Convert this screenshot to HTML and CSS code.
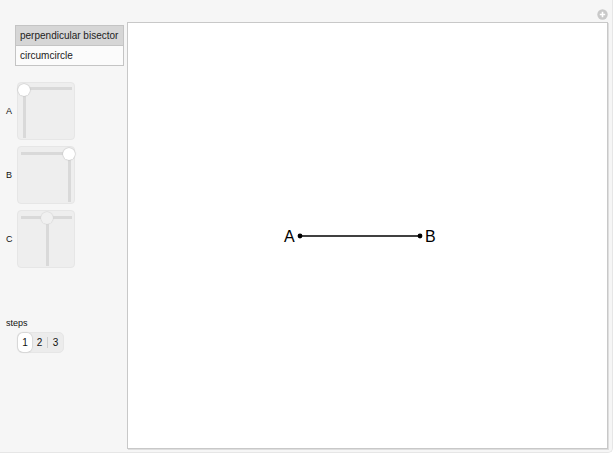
FILE: index.html
```html
<!DOCTYPE html>
<html>
<head>
<meta charset="utf-8">
<link rel="stylesheet" href="styles.css">
</head>
<body>
<div class="panel">
  <div class="plus"><svg width="11" height="11" viewBox="0 0 11 11"><circle cx="5.5" cy="5.5" r="5.2" fill="#c9c9c9"/><path d="M5.5 2.8v5.4M2.8 5.5h5.4" stroke="#fff" stroke-width="1.6"/></svg></div>
  <div class="controls">
    <div class="setter">
      <div class="opt sel">perpendicular bisector</div>
      <div class="opt">circumcircle</div>
    </div>
    <div class="sliders">
      <div class="srow"><span class="lbl">A</span>
        <div class="pad"><div class="htrack" style="top:4px"></div><div class="vtrack" style="left:5px"></div><div class="thumb" style="left:0px;top:1px"></div></div>
      </div>
      <div class="srow"><span class="lbl">B</span>
        <div class="pad"><div class="htrack" style="top:5px"></div><div class="vtrack" style="left:50px"></div><div class="thumb" style="left:45px;top:1px"></div></div>
      </div>
      <div class="srow"><span class="lbl">C</span>
        <div class="pad"><div class="htrack" style="top:5px"></div><div class="vtrack" style="left:28px"></div><div class="thumb faded" style="left:23px;top:1px"></div></div>
      </div>
    </div>
    <div class="steps">
      <div class="slbl">steps</div>
      <div class="bar">
        <div class="b on">1</div><div class="b">2</div><div class="sep"></div><div class="b">3</div>
      </div>
    </div>
  </div>
  <div class="canvas">
    <svg width="479" height="425" viewBox="0 0 479 425">
      <line x1="172" y1="213" x2="292" y2="213" stroke="#000" stroke-width="1.3"/>
      <circle cx="172" cy="213" r="2.4" fill="#000"/>
      <circle cx="292" cy="213" r="2.4" fill="#000"/>
      <text x="156" y="219" class="pt">A</text>
      <text x="297" y="219" class="pt">B</text>
    </svg>
  </div>
</div>
</body>
</html>
```
FILE: styles.css
```css
html, body { margin: 0; padding: 0; background: #fff; }
body { font-family: "Liberation Sans", Arial, sans-serif; }
.panel {
  position: relative;
  width: 613px; height: 453px;
  box-sizing: border-box;
  background: #f6f6f6;
  border-right: 1px solid #e6e6e6;
  border-bottom: 1px solid #e6e6e6;
  border-bottom-right-radius: 5px;
  display: flex;
}
.plus { position: absolute; left: 597px; top: 9px; width: 11px; height: 11px; }
.plus svg { display: block; }
.controls { width: 127px; flex: none; padding-top: 25px; box-sizing: border-box; }
.setter { margin-left: 15px; width: 109px; border: 1px solid #c4c4c4; box-sizing: border-box; }
.opt { height: 19px; line-height: 19px; font-size: 10px; color: #222; padding-left: 4px; background: #fbfbfb; }
.opt.sel { background: #d6d6d6; border-bottom: 1px solid #c4c4c4; height: 19px; }
.sliders { margin-top: 16px; display: flex; flex-direction: column; gap: 6px; }
.srow { display: flex; align-items: center; height: 58px; }
.lbl { width: 17px; padding-left: 6px; box-sizing: border-box; font-size: 9px; color: #111; }
.pad { position: relative; width: 58px; height: 58px; background: #eeeeee; border: 1px solid #e6e6e6; border-radius: 4px; box-sizing: border-box; overflow: visible; }
.htrack { position: absolute; left: 3px; right: 2px; height: 3px; background: #d9d9d9; }
.vtrack { position: absolute; top: 3px; bottom: 1px; width: 3px; background: #d9d9d9; }
.thumb { position: absolute; width: 12px; height: 12px; border-radius: 50%; background: #fff; box-shadow: 0 0 1px 0.5px #c4c4c4; }
.thumb.faded { background: #f0f0f0; box-shadow: 0 0 1px 0.5px #d4d4d4; }
.steps { margin-top: 49px; }
.slbl { padding-left: 6px; font-size: 9px; color: #111; height: 12px; line-height: 12px; }
.bar { margin: 3px 0 0 17px; display: inline-flex; align-items: center; height: 19px; background: #ececec; border-radius: 5px; border: 1px solid #e6e6e6; }
.b { width: 15px; text-align: center; font-size: 10px; color: #111; line-height: 19px; }
.b.on { background: #fff; border-radius: 5px; box-shadow: 0 0 1px 0.5px #c9c9c9; width: 14px; }
.sep { width: 1px; height: 11px; background: #cfcfcf; }
.canvas { margin-top: 22px; width: 481px; height: 427px; box-sizing: border-box; background: #fff; border: 1px solid #c8c8c8; box-shadow: 1px 1px 0 #dedede; }
.canvas svg { display: block; }
.pt { font-family: "Liberation Sans", Arial, sans-serif; font-size: 16px; fill: #000; }
```
